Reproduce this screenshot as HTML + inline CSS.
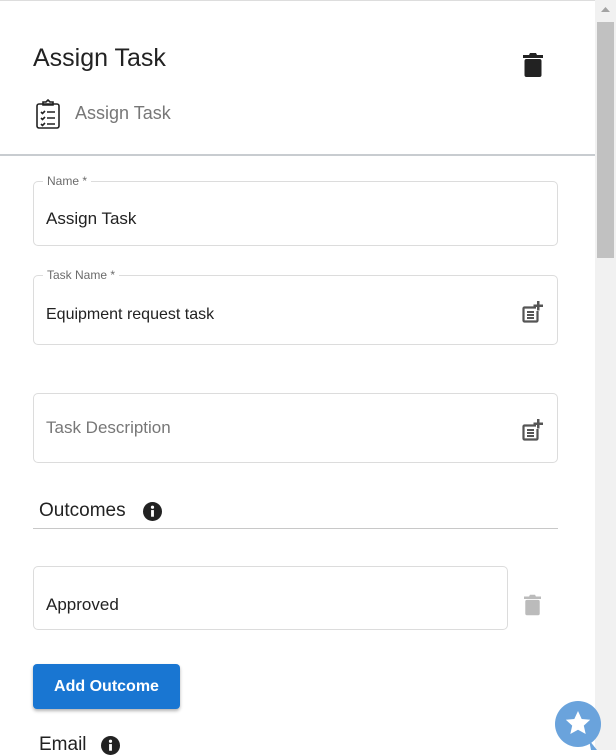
<!DOCTYPE html>
<html><head><style>
*{box-sizing:border-box}
body{margin:0;width:616px;height:750px;overflow:hidden;background:#fff;font-family:"Liberation Sans",Roboto,sans-serif;position:relative}
.a{position:absolute}
.box{position:absolute;border:1px solid #dcdcdc;border-radius:5px;background:#fff}
.lbl{position:absolute;top:-8px;left:9px;background:#fff;padding:0 4px;font-size:12px;color:#6b6b6b}
.txt{position:absolute;left:12px;font-size:16px;color:#222}
</style></head><body>
<div class="a" style="left:0;top:0;width:595px;height:1px;background:#ddd"></div>
<div class="a" style="left:33px;top:44px;font-size:25px;color:#222">Assign Task</div>
<svg class="a" style="left:523px;top:53px" width="20" height="24" viewBox="0 0 20 24"><path d="M0 2h6l1-2h6l1 2h6v3H0z" fill="#222"/><rect x="1.5" y="6" width="17" height="18" rx="2" fill="#222"/></svg>
<svg class="a" style="left:35px;top:99px" width="26" height="30" viewBox="0 0 26 30" fill="none" stroke="#222" stroke-width="1.6"><rect x="2" y="5" width="22" height="24" rx="2"/><path d="M8 5V3h3l2-2 2 2h3v3H8z"/><path d="M6 13l1.5 1.5L10 12M6 19l1.5 1.5L10 18M6 25l1.5 1.5L10 24M12 13h8M12 19h8M12 25h8"/></svg>
<div class="a" style="left:75px;top:103px;font-size:18px;color:#777">Assign Task</div>
<div class="a" style="left:0;top:154px;width:595px;height:2px;background:#c8ccd0"></div>

<div class="box" style="left:33px;top:181px;width:525px;height:65px"><span class="lbl">Name *</span><span class="txt" style="top:27px;font-size:17px">Assign Task</span></div>
<div class="box" style="left:33px;top:275px;width:525px;height:70px"><span class="lbl">Task Name *</span><span class="txt" style="top:30px">Equipment request task</span>
<svg class="a" style="left:486px;top:24px" width="24" height="24" viewBox="0 0 24 24"><path d="M16 7.5H4.5a1 1 0 0 0-1 1v12a1 1 0 0 0 1 1h12a1 1 0 0 0 1-1V11" fill="none" stroke="#555" stroke-width="2.2"/><path d="M7 11h7v2H7zM7 14h7v2H7zM7 17h7v2H7zM17 1h2.5v3.5H23V7h-3.5v3.5H17V7h-3.5V4.5H17z" fill="#555"/></svg></div>
<div class="box" style="left:33px;top:393px;width:525px;height:70px"><span class="txt" style="top:24px;font-size:17px;color:#777">Task Description</span>
<svg class="a" style="left:486px;top:24px" width="24" height="24" viewBox="0 0 24 24"><path d="M16 7.5H4.5a1 1 0 0 0-1 1v12a1 1 0 0 0 1 1h12a1 1 0 0 0 1-1V11" fill="none" stroke="#555" stroke-width="2.2"/><path d="M7 11h7v2H7zM7 14h7v2H7zM7 17h7v2H7zM17 1h2.5v3.5H23V7h-3.5v3.5H17V7h-3.5V4.5H17z" fill="#555"/></svg></div>

<div class="a" style="left:39px;top:500px;font-size:19px;color:#222">Outcomes</div>
<svg class="a" style="left:143px;top:502px" width="19" height="19" viewBox="0 0 20 20"><circle cx="10" cy="10" r="10" fill="#222"/><rect x="8.5" y="8.5" width="3" height="7" fill="#fff"/><circle cx="10" cy="5.5" r="1.7" fill="#fff"/></svg>
<div class="a" style="left:33px;top:528px;width:525px;height:1px;background:#c8c8c8"></div>

<div class="box" style="left:33px;top:566px;width:475px;height:64px"><span class="txt" style="top:28px;font-size:17px">Approved</span></div>
<svg class="a" style="left:524px;top:594px" width="17" height="22" viewBox="0 0 20 24"><path d="M0 2h6l1-2h6l1 2h6v3H0z" fill="#bbb"/><rect x="1.5" y="6" width="17" height="18" rx="2" fill="#bbb"/></svg>

<div class="a" style="left:33px;top:664px;width:147px;height:45px;background:#1976d2;border-radius:4px;box-shadow:0 2px 3px rgba(0,0,0,.3);color:#fff;font-weight:bold;font-size:16px;text-align:center;line-height:45px">Add Outcome</div>

<div class="a" style="left:39px;top:734px;font-size:19px;color:#222">Email</div>
<svg class="a" style="left:101px;top:736px" width="19" height="19" viewBox="0 0 20 20"><circle cx="10" cy="10" r="10" fill="#222"/><rect x="8.5" y="8.5" width="3" height="7" fill="#fff"/><circle cx="10" cy="5.5" r="1.7" fill="#fff"/></svg>

<div class="a" style="left:595px;top:0;width:21px;height:750px;background:#f1f1f1"></div>
<div class="a" style="left:597px;top:22px;width:17px;height:236px;background:#c1c1c1"></div>
<svg class="a" style="left:601px;top:7px" width="9" height="6"><path d="M0 5L4.5 0 9 5z" fill="#a3a3a3"/></svg>

<svg class="a" style="left:552px;top:700px" width="54" height="50" viewBox="0 0 54 50"><circle cx="26" cy="24" r="23" fill="#6aa3dc"/><path d="M37 40l8 10h-6z" fill="#6aa3dc"/><path d="M26 11l3.7 8 8.5.8-6.4 5.8 1.9 8.4L26 29.7 18.3 34l1.9-8.4-6.4-5.8 8.5-.8z" fill="#fff"/></svg>
</body></html>
